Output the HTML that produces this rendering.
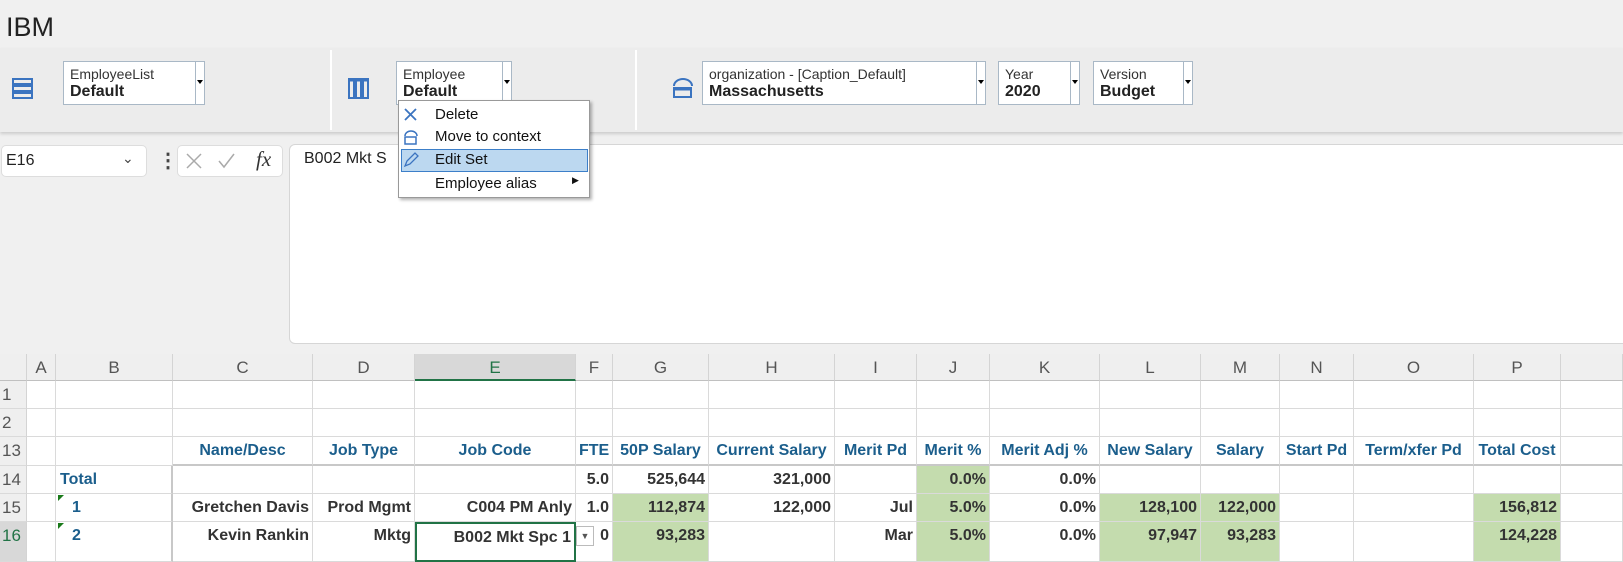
<!DOCTYPE html>
<html><head><meta charset="utf-8">
<style>
*{box-sizing:border-box;margin:0;padding:0}
body{width:1623px;height:562px;overflow:hidden;background:#f0f0f0;font-family:"Liberation Sans",Arial,sans-serif;position:relative}
.a{position:absolute}
.dd{position:absolute;background:#fff;border:1px solid #a9b8c6;height:44px}
.dd .l{position:absolute;left:6px;top:4px;font-size:14px;color:#333}
.dd .v{position:absolute;left:6px;top:21px;font-size:16px;font-weight:bold;color:#222}
.dd .b{position:absolute;right:0;top:0;width:9px;height:42px;border-left:1px solid #a9b8c6;background:#fff}
.dd .b:after{content:"";position:absolute;left:1px;top:18px;border-left:3px solid transparent;border-right:3px solid transparent;border-top:4px solid #000}
.grid{position:absolute;left:0;top:354px;width:1623px;height:208px;background:#fff;font-family:"Liberation Sans Narrow","Liberation Sans",sans-serif}
.c{position:absolute;border-right:1px solid #dadada;border-bottom:1px solid #dadada;font-size:16px;white-space:nowrap;overflow:hidden;line-height:28px;padding:0 3px}
.h{background:#efefef;color:#555;text-align:center;font-size:17px;border-right:1px solid #d4d4d4;border-bottom:1px solid #c0c0c0}
.bl{color:#1b5e8c;font-weight:bold;text-align:center}
.n{font-weight:bold;color:#333;text-align:right}
.g{background:#c4dcae}
.menu{position:absolute;left:398px;top:100px;width:192px;height:98px;background:#fff;border:1px solid #999;box-shadow:2px 2px 3px rgba(0,0,0,.3);font-size:15px;color:#111}
.menu div{position:absolute;left:36px}
</style></head><body>
<div class="a" style="left:6px;top:12px;font-size:27px;color:#222">IBM</div>
<div class="a" style="left:0;top:48px;width:1623px;height:84px;background:#ececec;box-shadow:0 2px 3px rgba(0,0,0,.15)"></div>
<div class="a" style="left:330px;top:50px;width:2px;height:80px;background:#fff"></div>
<div class="a" style="left:635px;top:50px;width:2px;height:80px;background:#fff"></div>
<svg class="a" style="left:12px;top:78px" width="22" height="22"><g fill="none" stroke="#3b74c0" stroke-width="2"><rect x="1" y="1" width="19" height="5"/><rect x="1" y="8" width="19" height="5"/><rect x="1" y="15" width="19" height="5"/></g></svg>
<svg class="a" style="left:348px;top:77px" width="22" height="24"><g fill="none" stroke="#3b74c0" stroke-width="2"><rect x="1" y="2" width="5" height="19"/><rect x="8" y="2" width="5" height="19"/><rect x="15" y="2" width="5" height="19"/></g><path d="M1 3h19" stroke="#3b74c0" stroke-width="3"/></svg>
<svg class="a" style="left:672px;top:77px" width="22" height="22"><g fill="none" stroke="#3b74c0" stroke-width="2"><path d="M2 9a9 7 0 0 1 18 0"/><rect x="2" y="11" width="17" height="9"/></g><path d="M2 12h17" stroke="#3b74c0" stroke-width="3"/></svg>
<div class="dd" style="left:63px;top:61px;width:142px"><div class="l">EmployeeList</div><div class="v">Default</div><div class="b"></div></div>
<div class="dd" style="left:396px;top:61px;width:116px"><div class="l">Employee</div><div class="v">Default</div><div class="b"></div></div>
<div class="dd" style="left:702px;top:61px;width:284px"><div class="l">organization - [Caption_Default]</div><div class="v">Massachusetts</div><div class="b"></div></div>
<div class="dd" style="left:998px;top:61px;width:82px"><div class="l">Year</div><div class="v">2020</div><div class="b"></div></div>
<div class="dd" style="left:1093px;top:61px;width:100px"><div class="l">Version</div><div class="v">Budget</div><div class="b"></div></div>
<div class="a" style="left:1px;top:145px;width:146px;height:32px;background:#fff;border:1px solid #ddd;border-radius:5px;font-size:16px;padding:6px 4px;color:#222">E16<span class="a" style="left:120px;top:4px;font-size:14px;color:#444">&#8964;</span></div>
<div class="a" style="left:158px;top:148px;font-size:20px;font-weight:bold;color:#444">&#8942;</div>
<div class="a" style="left:177px;top:145px;width:106px;height:32px;background:#fff;border:1px solid #ddd;border-radius:5px"></div>
<svg class="a" style="left:185px;top:152px" width="60" height="18"><path d="M2 2l14 14M16 2L2 16" stroke="#aaa" stroke-width="1.5"/><path d="M34 9l5 6l10-13" stroke="#aaa" stroke-width="1.5" fill="none"/></svg>
<div class="a" style="left:256px;top:147px;font-family:'Liberation Serif',serif;font-style:italic;font-size:21px;color:#333">fx</div>
<div class="a" style="left:289px;top:144px;width:1340px;height:200px;background:#fff;border:1px solid #d6d6d6;border-radius:6px"></div>
<div class="a" style="left:304px;top:150px;font-size:16px;color:#222">B002 Mkt S</div>
<div class="menu">
<svg class="a" style="left:4px;top:6px" width="16" height="16"><path d="M2 2l11 11M13 2L2 13" stroke="#3b74c0" stroke-width="1.8"/></svg>
<div style="top:5px">Delete</div>
<svg class="a" style="left:4px;top:28px" width="16" height="16"><g fill="none" stroke="#3b74c0" stroke-width="1.5"><path d="M2 7a6 5 0 0 1 12 0"/><rect x="2" y="8" width="11" height="7"/></g></svg>
<div style="top:27px">Move to context</div>
<div class="a" style="left:2px;top:48px;width:187px;height:23px;background:#bcd8f0;border:1px solid #3c7fc9"></div>
<svg class="a" style="left:4px;top:51px" width="16" height="16"><path d="M2 14l2-5 8-8 3 3-8 8z" fill="none" stroke="#3b74c0" stroke-width="1.3"/></svg>
<div style="top:50px">Edit Set</div>
<div style="top:74px">Employee alias</div>
<div style="left:173px;top:74px;font-size:9px">&#9654;</div>
</div>
<div class="grid" id="g"></div>
<script>
var xs=[0,27,56,173,313,415,576,613,709,835,917,990,1100,1201,1280,1354,1474,1561,1623];
var L=["","A","B","C","D","E","F","G","H","I","J","K","L","M","N","O","P",""];
var ys=[0,27,55,83,112,140,168,208];
var R=["","1","2","13","14","15","16"];
var hdr=["","","","Name/Desc","Job Type","Job Code","FTE","50P Salary","Current Salary","Merit Pd","Merit %","Merit Adj %","New Salary","Salary","Start Pd","Term/xfer Pd","Total Cost",""];
var d={4:["","","Total","","","","5.0","525,644","321,000","","0.0%","0.0%","","","","","",""],
5:["","","1","Gretchen Davis","Prod Mgmt","C004 PM Anly","1.0","112,874","122,000","Jul","5.0%","0.0%","128,100","122,000","","","156,812",""],
6:["","","2","Kevin Rankin","Mktg","B002 Mkt Spc 1","0","93,283","","Mar","5.0%","0.0%","97,947","93,283","","","124,228",""]};
var green={4:[10],5:[7,10,12,13,16],6:[7,10,12,13,16]};
var h="";
for(var r=0;r<7;r++)for(var c=0;c<18;c++){
 var x=xs[c],w=xs[c+1]-x,y=ys[r],hh=ys[r+1]-y,cls="c",t="",st="";
 if(r==0){cls+=" h";t=L[c];if(c==5){st="color:#217346;background:#d8d8d8;border-bottom:2px solid #217346";}}
 else if(c==0){cls+=" h";t=R[r];st="text-align:left;padding-left:2px;border-bottom:1px solid #dadada";if(r==6)st+=";color:#217346;background:#d8d8d8";}
 else if(r==3){cls+=" bl";t=hdr[c];}
 else if(d[r]){t=d[r][c];if(c==2){cls+=" bl";st="text-align:left;padding-left:"+(r==4?4:16)+"px";}else cls+=" n";
  if(green[r].indexOf(c)>=0)cls+=" g";}
 if(r==6&&c==5)st+=";border:2px solid #217346";
 if(r==3&&c>=3)st+=";border-bottom:2px solid #c8c8c8";
 if(r>=4&&c==2)st+=";border-right:2px solid #c8c8c8";
 h+='<div class="'+cls+'" style="left:'+x+'px;top:'+y+'px;width:'+w+'px;height:'+hh+'px;'+st+'">'+t+'</div>';
}
h+='<div class="a" style="left:576px;top:172px;width:18px;height:20px;background:#fff;border:1px solid #bbb;font-size:9px;text-align:center;line-height:18px;color:#555">&#9660;</div>';
h+='<div class="a" style="left:58px;top:141px;border-top:6px solid #1a7a1a;border-right:6px solid transparent"></div><div class="a" style="left:58px;top:169px;border-top:6px solid #1a7a1a;border-right:6px solid transparent"></div>';
document.getElementById("g").innerHTML=h;
</script>
</body></html>
